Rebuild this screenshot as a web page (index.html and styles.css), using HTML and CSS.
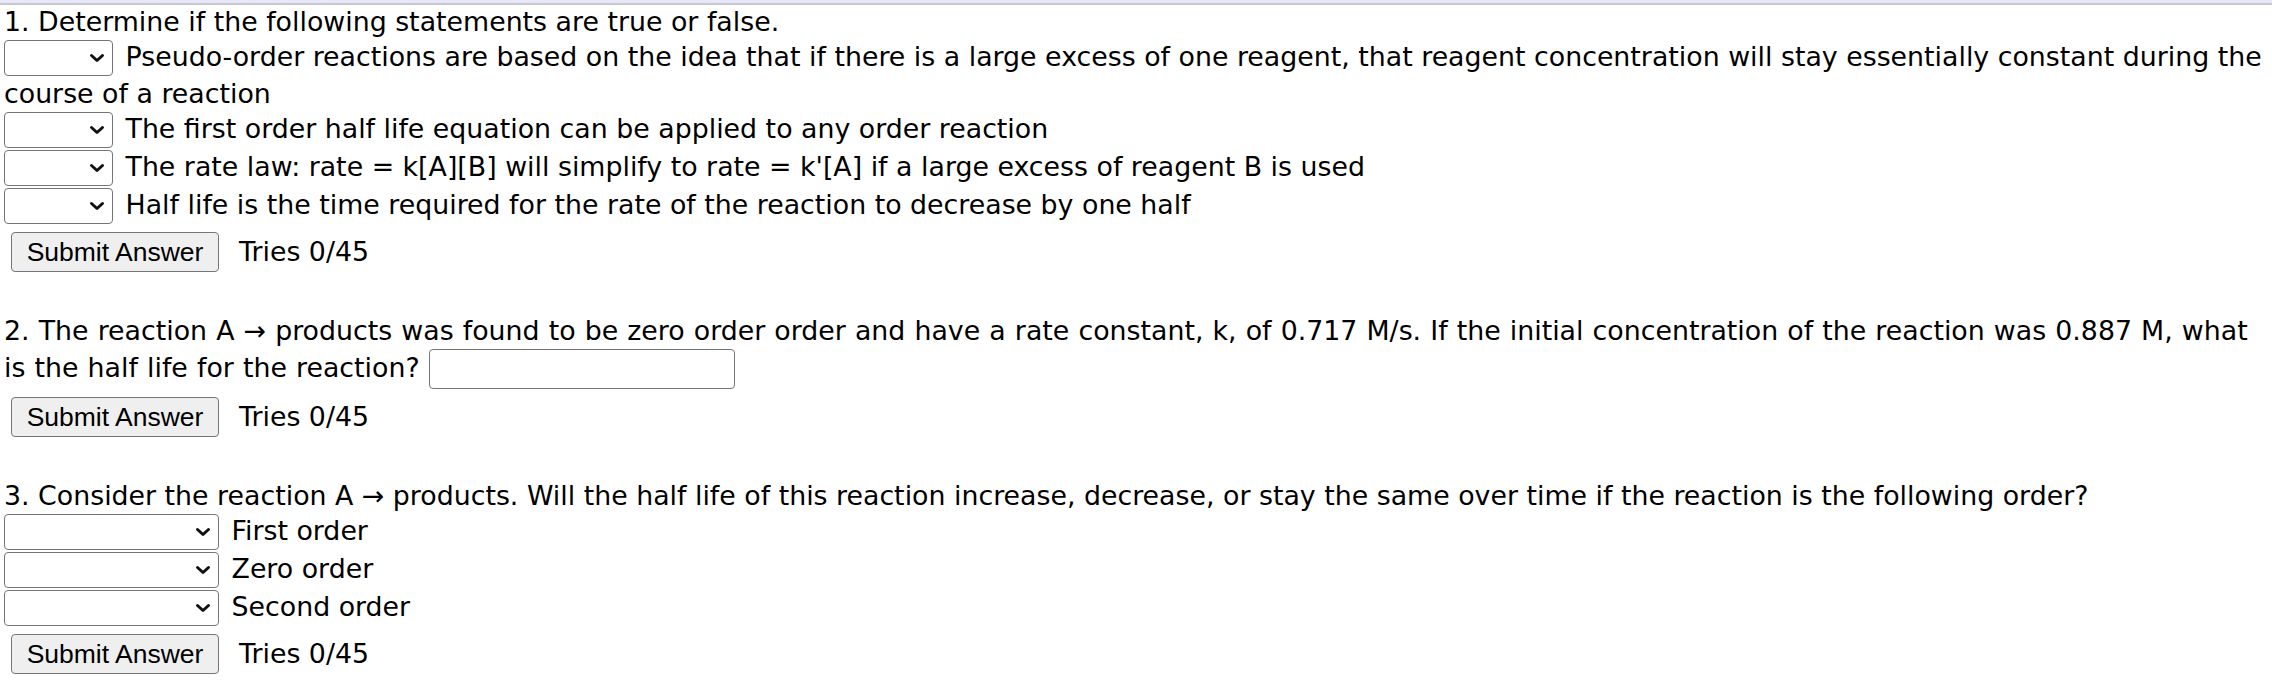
FILE: index.html
```html
<!DOCTYPE html>
<html>
<head>
<meta charset="utf-8">
<link rel="stylesheet" href="styles.css">
</head>
<body>
<div class="topbar"></div>
<div class="page">
  <div class="question">
    <div class="line">1. Determine if the following statements are true or false.</div>
    <div class="line"><span class="sel"><select class="narrow"></select><svg class="chev" viewBox="0 0 16 10"><path d="M2.5 2.5 L8 7.5 L13.5 2.5"/></svg></span> Pseudo-order reactions are based on the idea that if there is a large excess of one reagent, that reagent concentration will stay essentially constant during the course of a reaction</div>
    <div class="line"><span class="sel"><select class="narrow"></select><svg class="chev" viewBox="0 0 16 10"><path d="M2.5 2.5 L8 7.5 L13.5 2.5"/></svg></span> The first order half life equation can be applied to any order reaction</div>
    <div class="line"><span class="sel"><select class="narrow"></select><svg class="chev" viewBox="0 0 16 10"><path d="M2.5 2.5 L8 7.5 L13.5 2.5"/></svg></span> The rate law: rate = k[A][B] will simplify to rate = k'[A] if a large excess of reagent B is used</div>
    <div class="line"><span class="sel"><select class="narrow"></select><svg class="chev" viewBox="0 0 16 10"><path d="M2.5 2.5 L8 7.5 L13.5 2.5"/></svg></span> Half life is the time required for the rate of the reaction to decrease by one half</div>
    <div class="submit"><button class="btn">Submit Answer</button><span class="tries">Tries 0/45</span></div>
  </div>

  <div class="question">
    <div class="line spaced">2. The reaction A → products was found to be zero order order and have a rate constant, k, of 0.717 M/s. If the initial concentration of the reaction was 0.887 M, what is the half life for the reaction? <input class="answer" type="text"></div>
    <div class="submit"><button class="btn">Submit Answer</button><span class="tries">Tries 0/45</span></div>
  </div>

  <div class="question">
    <div class="line">3. Consider the reaction A → products. Will the half life of this reaction increase, decrease, or stay the same over time if the reaction is the following order?</div>
    <div class="line"><span class="sel"><select class="wide"></select><svg class="chev" viewBox="0 0 16 10"><path d="M2.5 2.5 L8 7.5 L13.5 2.5"/></svg></span> First order</div>
    <div class="line"><span class="sel"><select class="wide"></select><svg class="chev" viewBox="0 0 16 10"><path d="M2.5 2.5 L8 7.5 L13.5 2.5"/></svg></span> Zero order</div>
    <div class="line"><span class="sel"><select class="wide"></select><svg class="chev" viewBox="0 0 16 10"><path d="M2.5 2.5 L8 7.5 L13.5 2.5"/></svg></span> Second order</div>
    <div class="submit"><button class="btn">Submit Answer</button><span class="tries">Tries 0/45</span></div>
  </div>
</div>
</body>
</html>
```

FILE: styles.css
```css
html, body {
  margin: 0;
  padding: 0;
  background: #ffffff;
}

body {
  font-family: "DejaVu Sans", Verdana, sans-serif;
  font-size: 26.8px;
  color: #000000;
}

.topbar {
  height: 3px;
  background: #e6e6fa;
  border-bottom: 2px solid #c8c8cc;
}

.page {
  padding: 0 4px;
}

.question {
  margin-bottom: 42px;
}

.line {
  line-height: 34px;
}

.line.spaced {
  word-spacing: 0.6px;
}

.sel {
  position: relative;
  display: inline-block;
  vertical-align: middle;
  margin: 1px 4px 1px 0;
}

.sel select {
  display: block;
  appearance: none;
  -webkit-appearance: none;
  height: 36px;
  margin: 0;
  padding: 0;
  background: #ffffff;
  border: 1.5px solid #767676;
  border-radius: 4px;
  box-sizing: border-box;
}

.sel select.narrow {
  width: 109px;
}

.sel select.wide {
  width: 215px;
}

.chev {
  position: absolute;
  right: 8px;
  top: 13px;
  width: 16px;
  height: 10px;
  fill: none;
  stroke: #111111;
  stroke-width: 3;
  stroke-linecap: round;
  stroke-linejoin: round;
  pointer-events: none;
}

.answer {
  display: inline-block;
  vertical-align: middle;
  box-sizing: border-box;
  width: 306px;
  height: 40px;
  margin: 1px 0;
  padding: 0;
  border: 1.5px solid #767676;
  border-radius: 4px;
  background: #ffffff;
}

.submit {
  display: flex;
  align-items: center;
  gap: 20px;
  margin-top: 7px;
  height: 40px;
}

.btn {
  box-sizing: border-box;
  width: 208px;
  height: 40px;
  margin: 0 0 0 7px;
  padding: 0;
  background: #efefef;
  border: 1.5px solid #767676;
  border-radius: 4px;
  font-family: "Liberation Sans", Arial, sans-serif;
  font-size: 26.5px;
  color: #000000;
}

.tries {
  line-height: 34px;
}
```
